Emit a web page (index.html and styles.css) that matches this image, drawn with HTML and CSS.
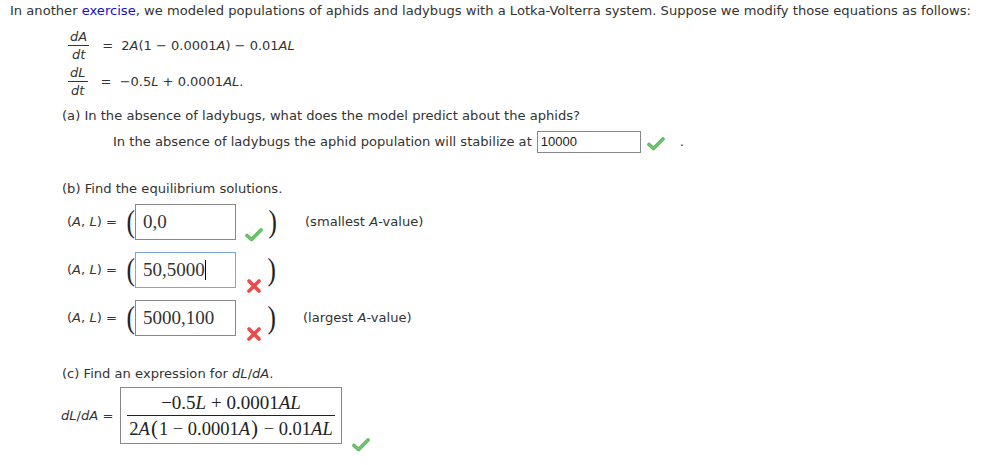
FILE: index.html
```html
<!DOCTYPE html>
<html>
<head>
<meta charset="utf-8">
<link rel="stylesheet" href="styles.css">
</head>
<body>
<div class="page">
  <p class="intro">In another <a class="link" href="#">exercise</a>, we modeled populations of aphids and ladybugs with a Lotka-Volterra system. Suppose we modify those equations as follows:</p>

  <div class="eqs">
    <div class="eq">
      <span class="frac"><span class="num"><i>dA</i></span><span class="den"><i>dt</i></span></span>
      <span class="rhs">= &nbsp;2<i>A</i>(1 − 0.0001<i>A</i>) − 0.01<i>AL</i></span>
    </div>
    <div class="eq">
      <span class="frac"><span class="num"><i>dL</i></span><span class="den"><i>dt</i></span></span>
      <span class="rhs">= &nbsp;−0.5<i>L</i> + 0.0001<i>AL</i>.</span>
    </div>
  </div>

  <p class="part part-a">(a) In the absence of ladybugs, what does the model predict about the aphids?</p>
  <div class="answer-line">
    <span>In the absence of ladybugs the aphid population will stabilize at</span>
    <span class="small-input">10000</span>
    <svg class="check" width="18" height="14" viewBox="0 0 18 14"><path d="M2 7.5 L6.5 11.5 L16 2" fill="none" stroke="#5cb85c" stroke-width="3.6" stroke-linecap="round" stroke-linejoin="round"/><path d="M2 7.5 L6.5 11.5 L16 2" fill="none" stroke="#76c776" stroke-width="1.2" stroke-linecap="round" stroke-linejoin="round"/></svg>
    <span class="dot">.</span>
  </div>

  <p class="part part-b">(b) Find the equilibrium solutions.</p>

  <div class="eq-row row-first">
    <span class="lhs">(<i>A</i>, <i>L</i>) =</span>
    <span class="paren">(</span>
    <span class="big-input">0,0</span>
    <svg class="check mark-low" width="18" height="14" viewBox="0 0 18 14"><path d="M2 7.5 L6.5 11.5 L16 2" fill="none" stroke="#5cb85c" stroke-width="3.6" stroke-linecap="round" stroke-linejoin="round"/><path d="M2 7.5 L6.5 11.5 L16 2" fill="none" stroke="#76c776" stroke-width="1.2" stroke-linecap="round" stroke-linejoin="round"/></svg>
    <span class="paren paren-r">)</span>
    <span class="note note-small">(smallest <i>A</i>-value)</span>
  </div>

  <div class="eq-row">
    <span class="lhs">(<i>A</i>, <i>L</i>) =</span>
    <span class="paren">(</span>
    <span class="big-input focused">50,5000<span class="caret"></span></span>
    <svg class="cross mark-low" width="16" height="16" viewBox="0 0 16 16"><path d="M3 3 L13 13 M13 3 L3 13" fill="none" stroke="#ee4a4a" stroke-width="3.6" stroke-linecap="round"/></svg>
    <span class="paren paren-r">)</span>
  </div>

  <div class="eq-row">
    <span class="lhs">(<i>A</i>, <i>L</i>) =</span>
    <span class="paren">(</span>
    <span class="big-input">5000,100</span>
    <svg class="cross mark-low" width="16" height="16" viewBox="0 0 16 16"><path d="M3 3 L13 13 M13 3 L3 13" fill="none" stroke="#ee4a4a" stroke-width="3.6" stroke-linecap="round"/></svg>
    <span class="paren paren-r">)</span>
    <span class="note note-large">(largest <i>A</i>-value)</span>
  </div>

  <p class="part part-c">(c) Find an expression for <i>dL</i>/<i>dA</i>.</p>

  <div class="c-row">
    <span class="lhs"><i>dL</i>/<i>dA</i> =</span>
    <div class="math-box">
      <div class="mfrac">
        <span class="mnum">−0.5<i>L</i> + 0.0001<i>AL</i></span>
        <span class="mden">2<i>A</i><span class="mp">(</span>1 − 0.0001<i>A</i><span class="mp">)</span> − 0.01<i>AL</i></span>
      </div>
    </div>
    <svg class="check mark-c" width="18" height="14" viewBox="0 0 18 14"><path d="M2 7.5 L6.5 11.5 L16 2" fill="none" stroke="#5cb85c" stroke-width="3.6" stroke-linecap="round" stroke-linejoin="round"/><path d="M2 7.5 L6.5 11.5 L16 2" fill="none" stroke="#76c776" stroke-width="1.2" stroke-linecap="round" stroke-linejoin="round"/></svg>
  </div>
</div>
</body>
</html>
```

FILE: styles.css
```css
html, body {
  margin: 0;
  padding: 0;
  background: #fff;
}
body { min-height: 465px; }
.page {
  font-family: "DejaVu Sans", Verdana, sans-serif;
  font-size: 13.1px;
  color: #333;
  padding: 3px 10px 14px 10px;
  line-height: 16px;
}
p { margin: 0; }
.link { color: #1010c8; text-decoration: none; }

.eqs {
  margin: 11px 0 0 58px;
  display: flex;
  flex-direction: column;
  gap: 5px;
}
.eq {
  display: flex;
  align-items: center;
  gap: 13px;
}
.frac {
  display: inline-flex;
  flex-direction: column;
  align-items: center;
  font-size: 13px;
  line-height: 13px;
}
.frac .num {
  border-bottom: 1px solid #333;
  padding: 0 2px 2px 2px;
}
.frac .den { padding-top: 2px; }
.rhs { font-size: 13px; }

.part { margin-left: 52px; }
.part-a { margin-top: 11px; }

.answer-line {
  display: flex;
  align-items: center;
  margin: 7px 0 0 103px;
}
.small-input {
  display: inline-block;
  box-sizing: border-box;
  width: 104px;
  height: 22px;
  margin-left: 5px;
  border: 1px solid #888;
  padding: 2px 3px;
  font-family: "Liberation Sans", Arial, sans-serif;
  font-size: 13px;
  line-height: 16px;
  color: #222;
}
.answer-line .check { margin: 3px 0 0 6px; }
.dot { margin-left: 15px; }

.part-b { margin-top: 28px; }

.eq-row {
  display: flex;
  align-items: center;
  margin-left: 57px;
  height: 36px;
}
.eq-row + .eq-row { margin-top: 12px; }
.part-b + .eq-row { margin-top: 7px; }
.lhs { width: 59px; }
.paren {
  display: inline-block;
  font-family: "Liberation Serif", serif;
  font-size: 28px;
  font-weight: normal;
  transform: scale(0.9, 1.15);
  color: #222;
  width: 8px;
  text-align: center;
}
.big-input {
  display: inline-block;
  box-sizing: border-box;
  width: 101px;
  height: 36px;
  margin-left: 1px;
  border: 1px solid #888;
  padding: 7px 7px;
  font-family: "Liberation Serif", "Times New Roman", serif;
  font-size: 19px;
  line-height: 20px;
  color: #333;
}
.big-input.focused {
  border-color: #7aa8d8;
}
.caret {
  display: inline-block;
  width: 1px;
  height: 20px;
  background: #000;
  vertical-align: -4px;
}
.mark-low { align-self: flex-end; margin: 0 0 -2px 9px; }
.cross.mark-low { margin: 0 0 -6px 10px; }
.paren-r { margin-left: 5px; }
.note-small { margin-left: 29px; }
.note-large { margin-left: 28px; }

.part-c { margin-top: 30px; }

.c-row {
  display: flex;
  align-items: center;
  margin: 5px 0 0 51px;
}
.c-row .lhs { width: 59px; }
.math-box {
  box-sizing: border-box;
  width: 222px;
  height: 57px;
  border: 1px solid #888;
  display: flex;
  align-items: center;
  justify-content: center;
}
.mfrac {
  display: inline-flex;
  flex-direction: column;
  align-items: center;
  font-family: "Liberation Serif", "Times New Roman", serif;
  font-size: 19px;
  line-height: 22px;
  color: #222;
}
.mnum {
  border-bottom: 1px solid #222;
  padding: 0 6px 1px;
  width: 100%;
  text-align: center;
  box-sizing: border-box;
}
.mden { padding: 1px 2px 0; font-size: 18.5px; }
.mp { font-size: 21px; margin: 0 1px; }
.mark-c { align-self: flex-end; margin: 0 0 -8px 10px; }
```
